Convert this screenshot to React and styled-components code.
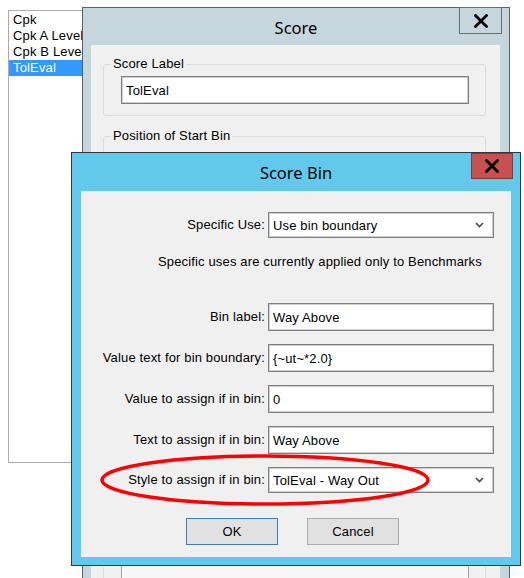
import React from "react";
import styled, { createGlobalStyle } from "styled-components";

const GlobalStyle = createGlobalStyle`
  html, body {
    margin: 0;
    padding: 0;
    background: #fff;
  }
  body {
    font-family: "Liberation Sans", Arial, sans-serif;
    font-size: 13px;
    letter-spacing: 0.15px;
    color: #000;
  }
`;

const Desktop = styled.div`
  position: relative;
  width: 524px;
  height: 578px;
  overflow: hidden;
  background: #fff;
`;

const ListBox = styled.ul`
  position: absolute;
  left: 8px;
  top: 10px;
  width: 120px;
  height: 453px;
  box-sizing: border-box;
  margin: 0;
  padding: 1px 0 0;
  list-style: none;
  background: #fff;
  border: 1px solid #abadb3;
`;

const ListItem = styled.li`
  height: 16px;
  line-height: 16px;
  padding-left: 4px;
  white-space: nowrap;
  background: ${(p) => (p.$selected ? "#3399ff" : "transparent")};
  color: ${(p) => (p.$selected ? "#fff" : "#000")};
`;

const Window = styled.div`
  position: absolute;
  left: ${(p) => p.$x}px;
  top: ${(p) => p.$y}px;
  width: ${(p) => p.$w}px;
  height: ${(p) => p.$h}px;
  box-sizing: border-box;
  display: flex;
  flex-direction: column;
  background: ${(p) => (p.$active ? "#63c9ea" : "#c5d7dd")};
  border: 1px solid ${(p) => (p.$active ? "#2e3a3f" : "#5a6064")};
`;

const TitleBar = styled.div`
  flex: none;
  display: grid;
  grid-template-columns: 1fr auto 1fr;
  height: ${(p) => p.$h}px;
`;

const Title = styled.div`
  grid-column: 2;
  align-self: start;
  margin-top: 8px;
  font-family: "Noto Sans", "Open Sans", sans-serif;
  font-size: 16.5px;
  letter-spacing: 0;
  line-height: 24px;
  color: #000;
  white-space: nowrap;
`;

const CloseButton = styled.div`
  grid-column: 3;
  justify-self: end;
  align-self: start;
  width: ${(p) => p.$w}px;
  height: ${(p) => p.$h}px;
  box-sizing: border-box;
  margin: ${(p) => (p.$active ? "0 7px 0 0" : "-1px 7px 0 0")};
  display: flex;
  align-items: center;
  justify-content: center;
  background: ${(p) => (p.$active ? "#c75050" : "transparent")};
  border: 1px solid ${(p) => (p.$active ? "#7e3a38" : "#6a6e70")};
`;

const Client = styled.div`
  flex: 1;
  min-height: 0;
  margin: ${(p) => p.$margin};
  background: #f0f0f0;
  display: flex;
  flex-direction: column;
`;

const GroupBox = styled.fieldset`
  margin: ${(p) => p.$top}px 14px 0 12px;
  padding: 4px 16px 11px 17px;
  border: 1px solid #dcdcdc;
  border-radius: 3px;
  min-width: 0;
`;

const GroupLegend = styled.legend`
  margin-left: -10px;
  padding: 0 2px;
  line-height: 16px;
  color: #000;
`;

const TextBox = styled.input`
  display: block;
  width: 100%;
  height: 28px;
  box-sizing: border-box;
  margin: 0;
  padding: 0 4px;
  font: inherit;
  letter-spacing: inherit;
  color: #000;
  background: #fff;
  border: 1px solid #7f7f7f;
  box-shadow: inset 0 0 0 1px #cfcfcf;
  outline: none;
`;

const InnerPanel = styled.div`
  margin-top: 20px;
  height: 500px;
  background: #f7f7f7;
  border: 1px solid #a3a3a3;
`;

const Form = styled.div`
  display: grid;
  grid-template-columns: 184px 226px;
  column-gap: 3px;
  row-gap: 13px;
  align-items: center;
  padding-top: 21px;
`;

const FieldLabel = styled.label`
  text-align: right;
  white-space: nowrap;
  line-height: 16px;
`;

const ComboBox = styled.div`
  height: 26px;
  box-sizing: border-box;
  display: flex;
  align-items: center;
  justify-content: space-between;
  padding: 0 9px 0 4px;
  background: #fff;
  border: 1px solid #7f7f7f;
  box-shadow: inset 0 0 0 1px #cfcfcf;
  white-space: nowrap;
`;

const Note = styled.div`
  grid-column: 1 / -1;
  margin: 3px 0 20px;
  padding-left: 77px;
  line-height: 16px;
  white-space: nowrap;
`;

const ButtonRow = styled.div`
  grid-column: 1 / -1;
  display: flex;
  gap: 29px;
  margin-top: 12px;
  padding-left: 105px;
`;

const Button = styled.button`
  width: 92px;
  height: 27px;
  box-sizing: border-box;
  margin: 0;
  padding: 0;
  font: inherit;
  letter-spacing: inherit;
  color: #000;
  background: #e1e1e1;
  border: 1px solid ${(p) => (p.$default ? "#3c7fb1" : "#adadad")};
`;

const Marker = styled.svg`
  position: absolute;
  left: 0;
  top: 0;
  width: 524px;
  height: 578px;
  pointer-events: none;
`;

const CloseGlyph = () => (
  <svg width="14" height="14" viewBox="0 0 14 14">
    <path d="M1.5 1.5 L12.5 12.5 M12.5 1.5 L1.5 12.5" stroke="#000" strokeWidth="2.8" strokeLinecap="square" />
  </svg>
);

const Chevron = () => (
  <svg width="9" height="6" viewBox="0 0 9 6">
    <path d="M1 1 L4.5 4.5 L8 1" fill="none" stroke="#4d4d4d" strokeWidth="1.7" />
  </svg>
);

const fields = [
  { label: "Bin label:", value: "Way Above" },
  { label: "Value text for bin boundary:", value: "{~ut~*2.0}" },
  { label: "Value to assign if in bin:", value: "0" },
  { label: "Text to assign if in bin:", value: "Way Above" },
];

export default function App() {
  return (
    <Desktop>
      <GlobalStyle />
      <ListBox>
        <ListItem>Cpk</ListItem>
        <ListItem>Cpk A Level</ListItem>
        <ListItem>Cpk B Level</ListItem>
        <ListItem $selected>TolEval</ListItem>
      </ListBox>

      <Window $x={82} $y={7} $w={428} $h={640}>
        <TitleBar $h={37}>
          <Title>Score</Title>
          <CloseButton $w={43} $h={27}>
            <CloseGlyph />
          </CloseButton>
        </TitleBar>
        <Client $margin="0 9px 8px 8px">
          <GroupBox $top={11}>
            <GroupLegend>Score Label</GroupLegend>
            <TextBox readOnly value="TolEval" />
          </GroupBox>
          <GroupBox $top={12}>
            <GroupLegend>Position of Start Bin</GroupLegend>
            <InnerPanel />
          </GroupBox>
        </Client>
      </Window>

      <Window $active $x={71} $y={152} $w={450} $h={414}>
        <TitleBar $h={38}>
          <Title>Score Bin</Title>
          <CloseButton $active $w={42} $h={26}>
            <CloseGlyph />
          </CloseButton>
        </TitleBar>
        <Client $margin="0 9px 8px 9px">
          <Form>
            <FieldLabel>Specific Use:</FieldLabel>
            <ComboBox>
              <span>Use bin boundary</span>
              <Chevron />
            </ComboBox>
            <Note>Specific uses are currently applied only to Benchmarks</Note>
            {fields.map((f) => (
              <React.Fragment key={f.label}>
                <FieldLabel>{f.label}</FieldLabel>
                <TextBox readOnly value={f.value} />
              </React.Fragment>
            ))}
            <FieldLabel>Style to assign if in bin:</FieldLabel>
            <ComboBox>
              <span>TolEval - Way Out</span>
              <Chevron />
            </ComboBox>
            <ButtonRow>
              <Button $default>OK</Button>
              <Button>Cancel</Button>
            </ButtonRow>
          </Form>
        </Client>
      </Window>

      <Marker viewBox="0 0 524 578">
        <ellipse cx="265" cy="480" rx="163" ry="24" fill="none" stroke="#ff0000" strokeWidth="3.5" />
      </Marker>
    </Desktop>
  );
}
